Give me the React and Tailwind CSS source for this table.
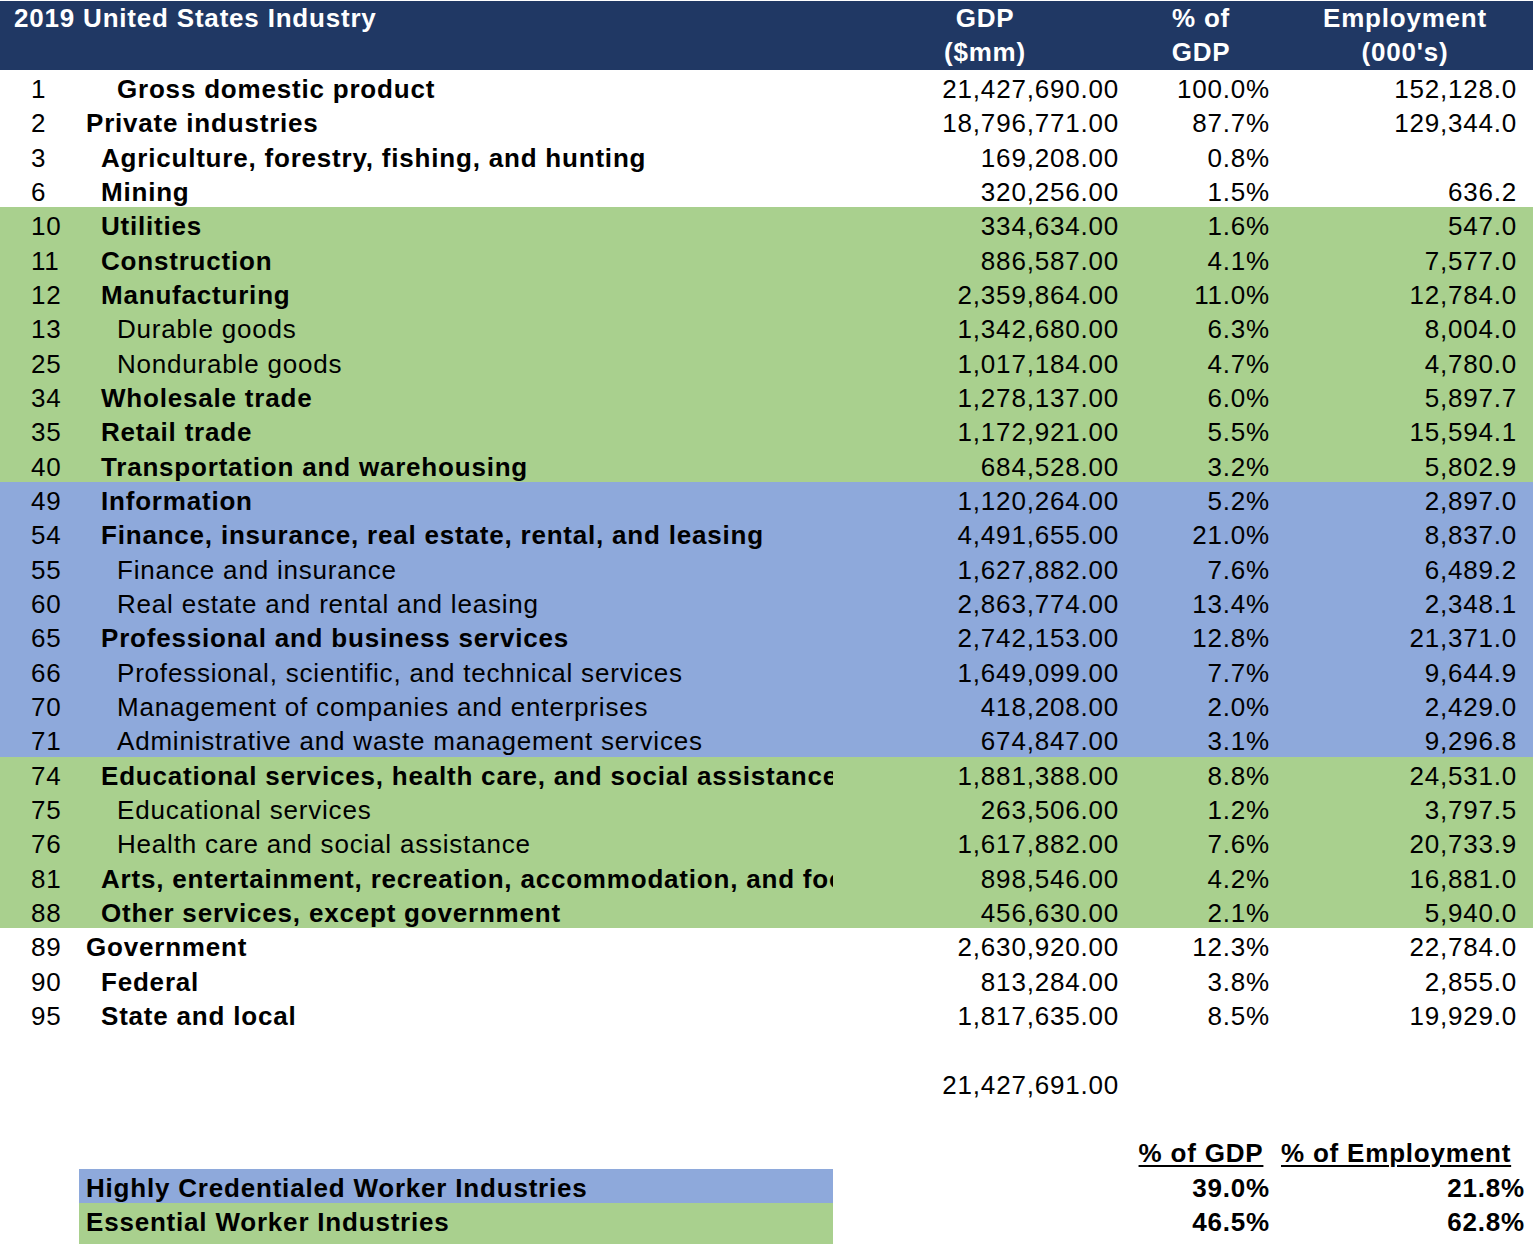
import React from "react";

const rows = [
  { n: "1", label: "Gross domestic product", lvl: 2, bold: true, gdp: "21,427,690.00", pct: "100.0%", emp: "152,128.0" },
  { n: "2", label: "Private industries", lvl: 0, bold: true, gdp: "18,796,771.00", pct: "87.7%", emp: "129,344.0" },
  { n: "3", label: "Agriculture, forestry, fishing, and hunting", lvl: 1, bold: true, gdp: "169,208.00", pct: "0.8%", emp: "" },
  { n: "6", label: "Mining", lvl: 1, bold: true, gdp: "320,256.00", pct: "1.5%", emp: "636.2" },
  { n: "10", label: "Utilities", lvl: 1, bold: true, gdp: "334,634.00", pct: "1.6%", emp: "547.0", bg: "g" },
  { n: "11", label: "Construction", lvl: 1, bold: true, gdp: "886,587.00", pct: "4.1%", emp: "7,577.0", bg: "g" },
  { n: "12", label: "Manufacturing", lvl: 1, bold: true, gdp: "2,359,864.00", pct: "11.0%", emp: "12,784.0", bg: "g" },
  { n: "13", label: "Durable goods", lvl: 2, gdp: "1,342,680.00", pct: "6.3%", emp: "8,004.0", bg: "g" },
  { n: "25", label: "Nondurable goods", lvl: 2, gdp: "1,017,184.00", pct: "4.7%", emp: "4,780.0", bg: "g" },
  { n: "34", label: "Wholesale trade", lvl: 1, bold: true, gdp: "1,278,137.00", pct: "6.0%", emp: "5,897.7", bg: "g" },
  { n: "35", label: "Retail trade", lvl: 1, bold: true, gdp: "1,172,921.00", pct: "5.5%", emp: "15,594.1", bg: "g" },
  { n: "40", label: "Transportation and warehousing", lvl: 1, bold: true, gdp: "684,528.00", pct: "3.2%", emp: "5,802.9", bg: "g" },
  { n: "49", label: "Information", lvl: 1, bold: true, gdp: "1,120,264.00", pct: "5.2%", emp: "2,897.0", bg: "b" },
  { n: "54", label: "Finance, insurance, real estate, rental, and leasing", lvl: 1, bold: true, gdp: "4,491,655.00", pct: "21.0%", emp: "8,837.0", bg: "b" },
  { n: "55", label: "Finance and insurance", lvl: 2, gdp: "1,627,882.00", pct: "7.6%", emp: "6,489.2", bg: "b" },
  { n: "60", label: "Real estate and rental and leasing", lvl: 2, gdp: "2,863,774.00", pct: "13.4%", emp: "2,348.1", bg: "b" },
  { n: "65", label: "Professional and business services", lvl: 1, bold: true, gdp: "2,742,153.00", pct: "12.8%", emp: "21,371.0", bg: "b" },
  { n: "66", label: "Professional, scientific, and technical services", lvl: 2, gdp: "1,649,099.00", pct: "7.7%", emp: "9,644.9", bg: "b" },
  { n: "70", label: "Management of companies and enterprises", lvl: 2, gdp: "418,208.00", pct: "2.0%", emp: "2,429.0", bg: "b" },
  { n: "71", label: "Administrative and waste management services", lvl: 2, gdp: "674,847.00", pct: "3.1%", emp: "9,296.8", bg: "b" },
  { n: "74", label: "Educational services, health care, and social assistance", lvl: 1, bold: true, gdp: "1,881,388.00", pct: "8.8%", emp: "24,531.0", bg: "g" },
  { n: "75", label: "Educational services", lvl: 2, gdp: "263,506.00", pct: "1.2%", emp: "3,797.5", bg: "g" },
  { n: "76", label: "Health care and social assistance", lvl: 2, gdp: "1,617,882.00", pct: "7.6%", emp: "20,733.9", bg: "g" },
  { n: "81", label: "Arts, entertainment, recreation, accommodation, and food services", lvl: 1, bold: true, gdp: "898,546.00", pct: "4.2%", emp: "16,881.0", bg: "g" },
  { n: "88", label: "Other services, except government", lvl: 1, bold: true, gdp: "456,630.00", pct: "2.1%", emp: "5,940.0", bg: "g" },
  { n: "89", label: "Government", lvl: 0, bold: true, gdp: "2,630,920.00", pct: "12.3%", emp: "22,784.0" },
  { n: "90", label: "Federal", lvl: 1, bold: true, gdp: "813,284.00", pct: "3.8%", emp: "2,855.0" },
  { n: "95", label: "State and local", lvl: 1, bold: true, gdp: "1,817,635.00", pct: "8.5%", emp: "19,929.0" },
];

const indent = ["pl-[7px]", "pl-[22px]", "pl-[38px]"];
const bgs = { g: "bg-[#a9d08e]", b: "bg-[#8ea9db]" };
const cols = "grid grid-cols-[79px_754px_292px_152px_256px]";

function Row({ r }) {
  return (
    <div className={`${cols} h-[34.33px] items-center pb-[2px] ${r.bg ? bgs[r.bg] : ""}`}>
      <div className="pl-[31px]">{r.n}</div>
      <div className={`${indent[r.lvl]} overflow-hidden whitespace-nowrap ${r.bold ? "font-bold" : ""}`}>{r.label}</div>
      <div className="text-right pr-[6px]">{r.gdp}</div>
      <div className="text-right pr-[7px]">{r.pct}</div>
      <div className="text-right pr-[16px]">{r.emp}</div>
    </div>
  );
}

function Legend({ label, bg, gdp, emp }) {
  return (
    <div className={`${cols} h-[34.33px] font-bold`}>
      <div />
      <div className={`${bg} flex items-center pl-[7px] pb-[2px]`}>{label}</div>
      <div />
      <div className="flex items-center justify-end pr-[7px] pb-[2px]">{gdp}</div>
      <div className="flex items-center justify-end pr-[8px] pb-[2px]">{emp}</div>
    </div>
  );
}

export default function App() {
  return (
    <div
      className="w-[1535px] min-h-[1251px] bg-white pt-[1px] text-black text-[26px] tracking-[0.8px]"
      style={{ fontFamily: '"Liberation Sans", Arial, sans-serif' }}
    >
      <div className="w-[1533px]">
        {/* header */}
        <div className={`${cols} h-[69px] bg-[#203864] text-white font-bold`}>
          <div className="col-span-2 pl-[14px] h-[34.5px] flex items-center whitespace-nowrap">2019 United States Industry</div>
          <div className="flex flex-col items-center pl-[12px]">
            <div className="h-[34.5px] flex items-center">GDP</div>
            <div className="h-[34.5px] flex items-center">($mm)</div>
          </div>
          <div className="flex flex-col items-center">
            <div className="h-[34.5px] flex items-center">% of</div>
            <div className="h-[34.5px] flex items-center">GDP</div>
          </div>
          <div className="flex flex-col items-center">
            <div className="h-[34.5px] flex items-center">Employment</div>
            <div className="h-[34.5px] flex items-center">(000's)</div>
          </div>
        </div>

        {rows.map((r) => (
          <Row key={r.n} r={r} />
        ))}

        <div className="h-[34.33px]" />
        <div className={`${cols} h-[34.33px] items-center pb-[2px]`}>
          <div />
          <div />
          <div className="text-right pr-[6px]">21,427,691.00</div>
        </div>
        <div className="h-[34.33px]" />

        {/* summary */}
        <div className={`${cols} h-[34.33px] items-center pb-[2px] font-bold`}>
          <div />
          <div />
          <div />
          <div className="text-center">
            <span className="underline decoration-2 underline-offset-[3px]">% of GDP</span>
          </div>
          <div className="pl-[4px]">
            <span className="underline decoration-2 underline-offset-[3px]">% of Employment</span>
          </div>
        </div>
        <Legend label="Highly Credentialed Worker Industries" bg="bg-[#8ea9db]" gdp="39.0%" emp="21.8%" />
        <Legend label="Essential Worker Industries" bg="bg-[#a9d08e]" gdp="46.5%" emp="62.8%" />
      </div>
    </div>
  );
}
